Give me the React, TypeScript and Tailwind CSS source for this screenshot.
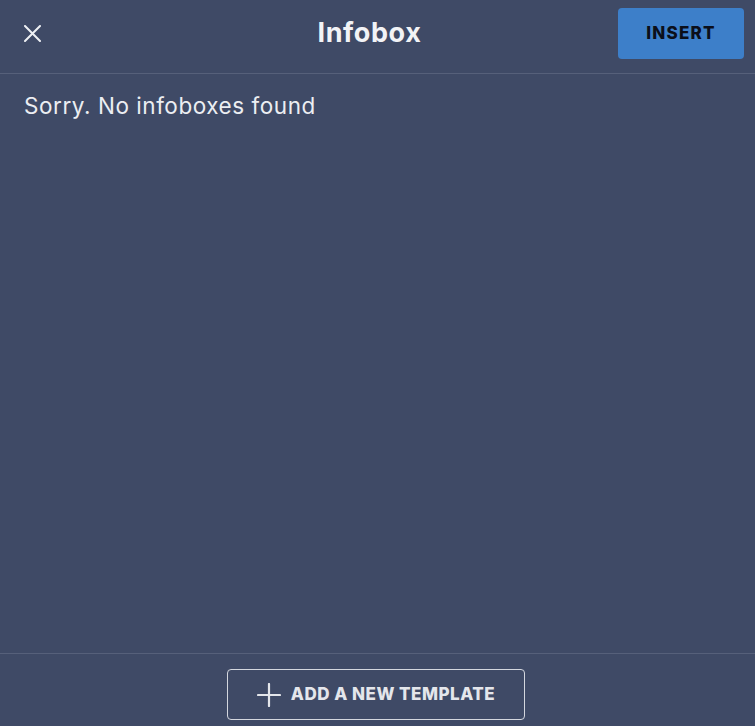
import React from "react";

export default function App() {
  return (
    <div
      className="w-[755px] h-[726px] bg-[#3f4a66] flex flex-col text-[#eef0f4]"
      style={{ fontFamily: "Inter, 'Noto Sans', sans-serif" }}
    >
      <div className="h-[74px] shrink-0 border-b border-[#56607a] flex items-center relative px-6">
        <button className="w-[17px] h-[17px] mt-[-6px] text-[#eef0f4]">
          <svg viewBox="0 0 17 17" width="17" height="17" fill="none" stroke="currentColor" strokeWidth="2" strokeLinecap="round">
            <path d="M1 1L16 16M16 1L1 16" />
          </svg>
        </button>
        <div className="absolute left-0 right-0 top-0 h-[66px] flex items-center justify-center pointer-events-none">
          <span className="text-[27px] font-bold tracking-[0.6px] text-[#f2f3f6] ml-[-16px]">Infobox</span>
        </div>
        <button className="ml-auto mr-[-13px] mt-[-6px] w-[126px] h-[51px] bg-[#3d7fc9] rounded-[4px] text-[17px] font-extrabold text-[#0b0f1a] tracking-[1.2px]">
          INSERT
        </button>
      </div>
      <div className="flex-1 px-6 pt-[17px]">
        <p className="text-[22.5px] leading-[30px] tracking-[0.55px] text-[#eceef2]">Sorry. No infoboxes found</p>
      </div>
      <div className="h-[73px] shrink-0 border-t border-[#56607a] flex justify-center pt-[15px]">
        <button className="w-[298px] h-[51px] mr-[3px] border border-[#d4d7de] rounded-[4px] flex items-center justify-center gap-[10px] text-[#e4e6eb]">
          <svg viewBox="0 0 24 24" width="24" height="24" fill="none" stroke="currentColor" strokeWidth="2.2" strokeLinecap="round">
            <path d="M12 1V23M1 12H23" />
          </svg>
          <span className="text-[17px] font-extrabold tracking-[0.5px]">ADD A NEW TEMPLATE</span>
        </button>
      </div>
    </div>
  );
}
